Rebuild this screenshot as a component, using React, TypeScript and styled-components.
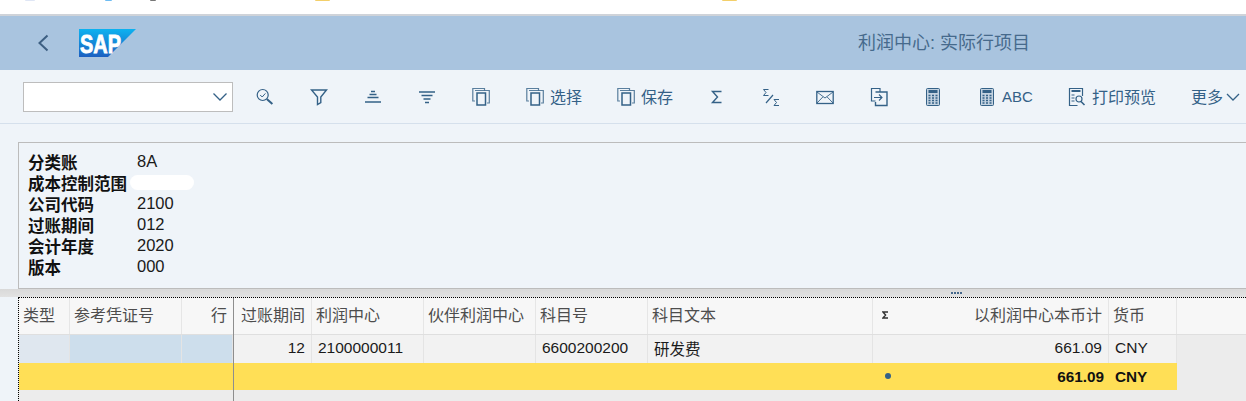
import React from "react";
import styled, { createGlobalStyle } from "styled-components";

const FONT = `"Liberation Sans", "Noto Sans CJK SC", sans-serif`;
const BLUE = "#346187";

const GlobalStyle = createGlobalStyle`
  html, body {
    margin: 0;
    padding: 0;
    background: #eff4f9;
  }
  body {
    font-family: ${FONT};
    overflow: hidden;
  }
`;

const Page = styled.div`
  width: 1246px;
  height: 401px;
  display: flex;
  flex-direction: column;
  overflow: hidden;
`;

const TopStrip = styled.div`
  position: relative;
  height: 14px;
  flex: none;
  background: #fff;
  border-bottom: 2px solid #cfd3d9;
`;

const Glint = styled.span<{ $left: number; $width: number; $color: string }>`
  position: absolute;
  top: 0;
  left: ${(p) => p.$left}px;
  width: ${(p) => p.$width}px;
  height: 1px;
  border-radius: 0 0 3px 3px;
  background: ${(p) => p.$color};
`;

const ShellBar = styled.header`
  height: 54px;
  flex: none;
  display: flex;
  align-items: center;
  padding-left: 36px;
  background: #a9c4df;
`;

const BackIcon = styled.svg`
  width: 14px;
  height: 20px;
`;

const Logo = styled.svg`
  width: 57px;
  height: 28px;
  margin-left: 29px;
`;

const Title = styled.h1`
  margin: 0 0 0 722px;
  font-size: 18px;
  font-weight: 400;
  line-height: 26px;
  white-space: nowrap;
  color: #466a8c;
`;

const Toolbar = styled.div`
  height: 53px;
  flex: none;
  display: flex;
  align-items: center;
  padding-left: 23px;
  background: #eff4f9;
  border-bottom: 1px solid #d5e0ec;
`;

const Select = styled.div`
  width: 210px;
  height: 30px;
  flex: none;
  box-sizing: border-box;
  margin-right: 5px;
  padding-right: 4px;
  display: flex;
  align-items: center;
  justify-content: flex-end;
  background: #fff;
  border: 1px solid #bdbdbd;
`;

const ToolButton = styled.div`
  height: 36px;
  padding: 0 18px;
  flex: none;
  display: flex;
  align-items: center;
  gap: 6px;
  white-space: nowrap;
  color: ${BLUE};
`;

const LabelButton = styled(ToolButton)`
  padding-right: 17px;
`;

const MoreButton = styled(ToolButton)`
  gap: 2px;
  padding-right: 0;
`;

const Label = styled.span<{ $latin?: boolean }>`
  font-size: ${(p) => (p.$latin ? "15px" : "16px")};
  position: relative;
  top: ${(p) => (p.$latin ? "0" : "-1px")};
`;

const Icon = styled.svg`
  width: 18px;
  height: 20px;
  flex: none;
  fill: none;
  stroke: ${BLUE};
  stroke-width: 1.2;
`;

const SmallChevron = styled.svg`
  width: 16px;
  height: 10px;
  flex: none;
  fill: none;
  stroke: ${BLUE};
  stroke-width: 1.3;
`;

const Content = styled.main`
  flex: 1;
  min-height: 0;
  display: flex;
  flex-direction: column;
  padding: 18px 0 0 18px;
`;

const InfoPanel = styled.section`
  height: 147px;
  flex: none;
  box-sizing: border-box;
  padding: 10px 0 0 9px;
  display: grid;
  grid-template-columns: 109px 1fr;
  grid-auto-rows: 21px;
  align-items: center;
  border: 1px solid #bcbcbc;
  border-right: 0;
  background: #eff4f9;
`;

const InfoLabel = styled.div`
  font-size: 16.5px;
  font-weight: 700;
  line-height: 21px;
  white-space: nowrap;
  color: #111;
`;

const InfoValue = styled.div`
  font-size: 16.5px;
  line-height: 21px;
  margin-top: -4px;
  color: #1a1a1a;
`;

const Redacted = styled.div`
  width: 64px;
  height: 15px;
  margin: -4px 0 0 -7px;
  border-radius: 8px;
  background: #fff;
`;

const SashBar = styled.div`
  height: 8px;
  flex: none;
  margin-left: -18px;
  padding-left: 951px;
  display: flex;
  align-items: center;
  gap: 1px;
  background: linear-gradient(#d9d9d9, #e2e2e2);
`;

const SashDot = styled.span`
  width: 2px;
  height: 2px;
  background: #46698c;
`;

const Table = styled.div`
  flex: 1;
  min-height: 0;
  display: flex;
  background: #ececec;
  border-top: 1px dotted #000;
  border-left: 1px dotted #000;
`;

const Pane = styled.div<{ $frozen?: boolean }>`
  display: flex;
  flex-direction: column;
  flex: ${(p) => (p.$frozen ? "none" : "1")};
  width: ${(p) => (p.$frozen ? "214px" : "auto")};
  border-right: ${(p) => (p.$frozen ? "1px solid #8e8e8e" : "0")};
`;

const HeaderRow = styled.div`
  height: 36px;
  flex: none;
  display: flex;
  background: #f7f7f7;
  border-bottom: 1px solid #dfdfdf;
`;

const DataRow = styled.div`
  height: 28px;
  flex: none;
  display: flex;
`;

const TotalRow = styled.div<{ $width?: number }>`
  height: 27px;
  flex: none;
  display: flex;
  width: ${(p) => (p.$width ? `${p.$width}px` : "auto")};
  background: #ffdf56;
`;

const HeadCell = styled.div<{ $w: number; $right?: boolean; $plain?: boolean }>`
  width: ${(p) => p.$w}px;
  flex: none;
  box-sizing: border-box;
  padding: 0 ${(p) => (p.$right ? "6px" : "4px")} 4px 4px;
  display: flex;
  align-items: center;
  justify-content: ${(p) => (p.$right ? "flex-end" : "flex-start")};
  font-size: 16px;
  white-space: nowrap;
  color: #4d4d4d;
  border-right: ${(p) => (p.$plain ? "0" : "1px solid #e6e6e6")};
`;

const Cell = styled.div<{ $w: number; $right?: boolean; $bg?: string }>`
  width: ${(p) => p.$w}px;
  flex: none;
  box-sizing: border-box;
  padding: 0 ${(p) => (p.$right ? "6px" : "5px")} 2px 6px;
  display: flex;
  align-items: center;
  justify-content: ${(p) => (p.$right ? "flex-end" : "flex-start")};
  font-size: 15.5px;
  white-space: nowrap;
  color: #1a1a1a;
  background: ${(p) => p.$bg ?? "#f2f2f2"};
  border-right: 1px solid #e4e4e4;
`;

const TotalCell = styled.div<{ $w: number; $right?: boolean }>`
  width: ${(p) => p.$w}px;
  flex: none;
  box-sizing: border-box;
  padding: 0 5px 0 6px;
  display: flex;
  align-items: center;
  justify-content: ${(p) => (p.$right ? "flex-end" : "flex-start")};
  font-size: 15.3px;
  font-weight: 700;
  white-space: nowrap;
  color: #111;
`;

const SumMark = styled.svg`
  position: absolute;
  left: 9px;
  top: 13px;
  width: 7px;
  height: 8px;
  fill: none;
  stroke: #333;
  stroke-width: 1.4;
`;

const Dot = styled.span`
  position: absolute;
  left: 12px;
  top: 10px;
  width: 6px;
  height: 6px;
  border-radius: 50%;
  background: #346187;
`;

const SumHead = styled(HeadCell)`
  position: relative;
`;

const SumTotal = styled(TotalCell)`
  position: relative;
`;

const Spacer = styled.div`
  flex: 1;
`;

const Copies = () => (
  <Icon viewBox="0 0 18 20">
    <path d="M3 14H0.8V1.5H12.5V3.5" opacity="0.8" />
    <path d="M3 3.5H17.3V16H15" opacity="0.8" />
    <rect x="5" y="6" width="8.5" height="12" strokeWidth="1.5" />
  </Icon>
);

const Calculator = () => (
  <Icon viewBox="0 0 18 20">
    <rect x="2.5" y="1.5" width="13" height="17" rx="1" fill="#c3d2e0" strokeWidth="1" />
    <rect x="4.5" y="3" width="9" height="3" fill={BLUE} stroke="none" />
    <path d="M4.5 8.5h9M4.5 11h9M4.5 13.5h9M4.5 16h9" strokeWidth="1.4" strokeDasharray="2 1.5" />
  </Icon>
);

const frozenCols = [51, 112, 51];
const mainCols = [78, 112, 112, 112, 225, 236, 68];

export default function App() {
  return (
    <Page>
      <GlobalStyle />
      <TopStrip>
        <Glint $left={25} $width={10} $color="#dfe6f5" />
        <Glint $left={105} $width={7} $color="#6ebcf2" />
        <Glint $left={150} $width={6} $color="#777" />
        <Glint $left={315} $width={15} $color="#f3cf6a" />
        <Glint $left={722} $width={15} $color="#f3cf6a" />
      </TopStrip>

      <ShellBar>
        <BackIcon viewBox="0 0 14 20">
          <path d="M11.5 2.5 3.5 10l8 7.5" fill="none" stroke="#3d5f82" strokeWidth="2" />
        </BackIcon>
        <Logo viewBox="0 0 57 28">
          <defs>
            <linearGradient id="sapBlue" x1="0" y1="0" x2="0" y2="1">
              <stop offset="0" stopColor="#0db2f0" />
              <stop offset="1" stopColor="#1c5fc0" />
            </linearGradient>
          </defs>
          <polygon points="0,0 57,0 29,28 0,28" fill="url(#sapBlue)" />
          <text
            x="1"
            y="23.5"
            fontFamily="Liberation Sans"
            fontWeight="700"
            fontSize="25"
            textLength="41"
            lengthAdjust="spacingAndGlyphs"
            fill="#fff"
            stroke="#fff"
            strokeWidth="0.8"
          >
            SAP
          </text>
        </Logo>
        <Title>利润中心: 实际行项目</Title>
      </ShellBar>

      <Toolbar>
        <Select>
          <SmallChevron viewBox="0 0 16 10">
            <path d="M1.5 1.5 8 8l6.5-6.5" />
          </SmallChevron>
        </Select>
        <ToolButton>
          <Icon viewBox="0 0 18 20">
            <circle cx="6.7" cy="8" r="5.5" />
            <path d="M4.2 8l2 2 3.2-3.6" strokeWidth="1" />
            <path d="M10.8 12l5.6 5" strokeWidth="2" />
          </Icon>
        </ToolButton>
        <ToolButton>
          <Icon viewBox="0 0 18 20">
            <path d="M1.5 3H16.5L10.8 10V15.5L7.5 17.5V10z" strokeWidth="1.4" />
          </Icon>
        </ToolButton>
        <ToolButton>
          <Icon viewBox="0 0 18 20">
            <path d="M7 4.5h4M5.5 7.5h7M3.5 10.5h11M1 15h16" strokeWidth="1.3" />
          </Icon>
        </ToolButton>
        <ToolButton>
          <Icon viewBox="0 0 18 20">
            <path d="M1 5h16M3.5 8.5h11M5.5 12h7M7 15.5h4" strokeWidth="1.3" />
          </Icon>
        </ToolButton>
        <ToolButton>
          <Copies />
        </ToolButton>
        <LabelButton>
          <Copies />
          <Label>选择</Label>
        </LabelButton>
        <LabelButton>
          <Copies />
          <Label>保存</Label>
        </LabelButton>
        <ToolButton>
          <Icon viewBox="0 0 18 20">
            <path d="M13.5 4.5H4.5L9.5 10l-5 5.5h9" strokeWidth="1.4" />
          </Icon>
        </ToolButton>
        <ToolButton>
          <Icon viewBox="0 0 18 20">
            <path d="M6.5 2.5h-5L4 5.5 1.5 8.5h5" strokeWidth="1" />
            <path d="M4 16 11 8" strokeWidth="1.2" />
            <path d="M17 12.5h-5L14.5 15.5 12 18.5h5" strokeWidth="1" />
          </Icon>
        </ToolButton>
        <ToolButton>
          <Icon viewBox="0 0 18 20">
            <rect x="0.8" y="4.5" width="16.4" height="12" strokeWidth="1.3" />
            <path d="M1 5 9 11l8-6M1 16l6-6.2M17 16l-6-6.2" strokeWidth="0.9" />
          </Icon>
        </ToolButton>
        <ToolButton>
          <Icon viewBox="0 0 18 20">
            <path d="M5.5 14H1.5V1.5H10V5" strokeWidth="1.2" />
            <path d="M5.5 5h11.5v13.5H5.5V15" strokeWidth="1.4" />
            <path d="M4 10.5h7.5M9 7.5l3 3-3 3" strokeWidth="1.1" />
          </Icon>
        </ToolButton>
        <ToolButton>
          <Calculator />
        </ToolButton>
        <LabelButton>
          <Calculator />
          <Label $latin>ABC</Label>
        </LabelButton>
        <LabelButton>
          <Icon viewBox="0 0 18 20">
            <path d="M14.5 9V1.5h-13v17h8" strokeWidth="1.2" />
            <path d="M3.5 4h9" strokeWidth="2" />
            <path d="M3.5 8h3M3.5 11h3M3.5 14h3" strokeWidth="1" />
            <circle cx="11" cy="12" r="3" strokeWidth="1.2" />
            <path d="M13 14.5l3.5 3.5" strokeWidth="1.6" />
          </Icon>
          <Label>打印预览</Label>
        </LabelButton>
        <MoreButton>
          <Label>更多</Label>
          <SmallChevron viewBox="0 0 16 10">
            <path d="M2 2l6 6 6-6" />
          </SmallChevron>
        </MoreButton>
      </Toolbar>

      <Content>
        <InfoPanel>
          <InfoLabel>分类账</InfoLabel>
          <InfoValue>8A</InfoValue>
          <InfoLabel>成本控制范围</InfoLabel>
          <Redacted />
          <InfoLabel>公司代码</InfoLabel>
          <InfoValue>2100</InfoValue>
          <InfoLabel>过账期间</InfoLabel>
          <InfoValue>012</InfoValue>
          <InfoLabel>会计年度</InfoLabel>
          <InfoValue>2020</InfoValue>
          <InfoLabel>版本</InfoLabel>
          <InfoValue>000</InfoValue>
        </InfoPanel>

        <SashBar>
          <SashDot />
          <SashDot />
          <SashDot />
          <SashDot />
        </SashBar>

        <Table>
          <Pane $frozen>
            <HeaderRow>
              <HeadCell $w={frozenCols[0]}>类型</HeadCell>
              <HeadCell $w={frozenCols[1]}>参考凭证号</HeadCell>
              <HeadCell $w={frozenCols[2]} $right $plain>
                行
              </HeadCell>
            </HeaderRow>
            <DataRow>
              <Cell $w={frozenCols[0]} $bg="#dfe7ef" />
              <Cell $w={frozenCols[1]} $bg="#cddeec" />
              <Cell $w={frozenCols[2]} $bg="#cddeec" />
            </DataRow>
            <TotalRow />
          </Pane>
          <Pane>
            <HeaderRow>
              <HeadCell $w={mainCols[0]} $right>
                过账期间
              </HeadCell>
              <HeadCell $w={mainCols[1]}>利润中心</HeadCell>
              <HeadCell $w={mainCols[2]}>伙伴利润中心</HeadCell>
              <HeadCell $w={mainCols[3]}>科目号</HeadCell>
              <HeadCell $w={mainCols[4]}>科目文本</HeadCell>
              <SumHead $w={mainCols[5]} $right>
                <SumMark viewBox="0 0 7 8">
                  <path d="M6 1H1l2.6 3L1 7h5" />
                </SumMark>
                以利润中心本币计
              </SumHead>
              <HeadCell $w={mainCols[6]}>货币</HeadCell>
              <Spacer />
            </HeaderRow>
            <DataRow>
              <Cell $w={mainCols[0]} $right>
                12
              </Cell>
              <Cell $w={mainCols[1]}>2100000011</Cell>
              <Cell $w={mainCols[2]} />
              <Cell $w={mainCols[3]}>6600200200</Cell>
              <Cell $w={mainCols[4]}>研发费</Cell>
              <Cell $w={mainCols[5]} $right>
                661.09
              </Cell>
              <Cell $w={mainCols[6]}>CNY</Cell>
            </DataRow>
            <TotalRow $width={943}>
              <TotalCell $w={mainCols[0]} />
              <TotalCell $w={mainCols[1]} />
              <TotalCell $w={mainCols[2]} />
              <TotalCell $w={mainCols[3]} />
              <TotalCell $w={mainCols[4]} />
              <SumTotal $w={mainCols[5]} $right>
                <Dot />
                661.09
              </SumTotal>
              <TotalCell $w={mainCols[6]}>CNY</TotalCell>
            </TotalRow>
          </Pane>
        </Table>
      </Content>
    </Page>
  );
}
